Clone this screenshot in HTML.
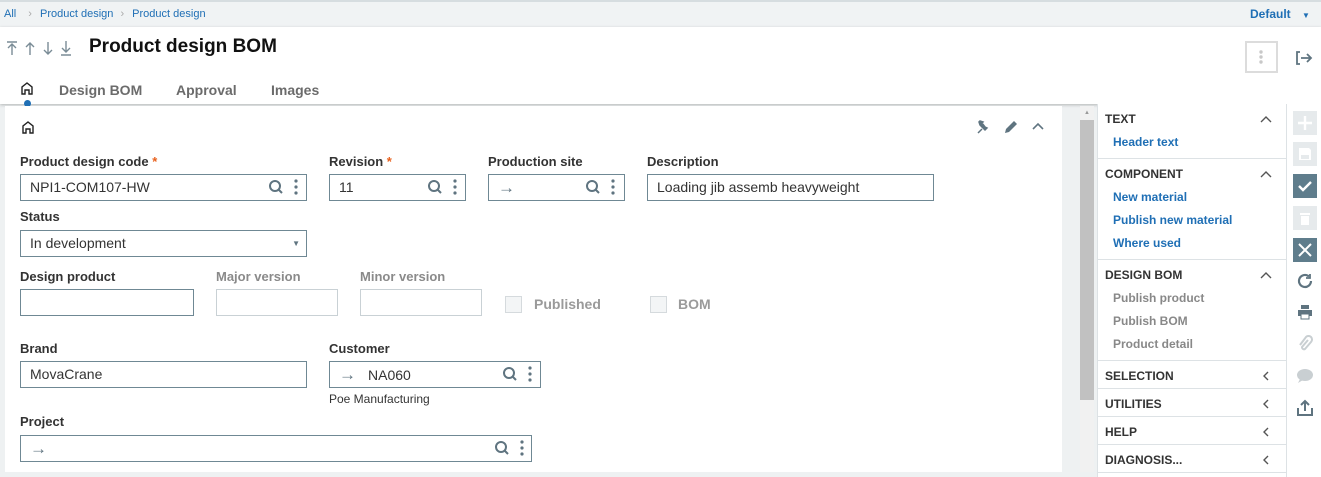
<!DOCTYPE html>
<html><head><meta charset="utf-8"><style>
*{box-sizing:border-box;margin:0;padding:0}
body{width:1321px;height:477px;overflow:hidden;background:#eef1f2;font-family:"Liberation Sans",sans-serif;position:relative;color:#222}
.a{position:absolute}
.lbl{position:absolute;font-size:13px;font-weight:bold;color:#333;white-space:nowrap}
.lbl.d{color:#8a8a8a}
.req{color:#e8601c}
.in{position:absolute;height:27px;border:1px solid #6f8894;background:#fff;font-size:14px;padding-left:9px;line-height:25px;color:#333}
.in.dis{border-color:#c9d1d5}
.ar{color:#5f7480;font-size:17px}
.sh{position:absolute;left:1105px;font-size:12px;font-weight:bold;color:#333}
.si{position:absolute;left:1113px;font-size:12px;font-weight:bold;color:#1f6fb5}
.si.g{color:#888}
.dv{position:absolute;left:1097px;width:190px;height:1px;background:#dde2e5}
.tb{position:absolute;left:1293px;width:24px;height:24px;display:flex;align-items:center;justify-content:center}
</style></head><body>
<div class="a" style="left:0;top:0;width:1321px;height:27px;background:#f0f3f4;border-top:2px solid #d6dde0"></div>
<div class="a" style="left:4px;top:8px;font-size:11px;color:#1f6fb5;white-space:nowrap">All <span style="color:#aaa;margin:0 5px 0 9px">›</span> Product design <span style="color:#aaa;margin:0 5px 0 4px">›</span> Product design</div>
<div class="a" style="left:1250px;top:7px;font-size:12px;font-weight:bold;color:#1f6fb5">Default <span style="font-size:8px;margin-left:8px">▼</span></div>
<div class="a" style="left:0;top:27px;width:1321px;height:77px;background:#fff;box-shadow:0 1px 3px rgba(0,0,0,.25)"></div>
<svg class="a" style="left:6px;top:40px" width="66" height="16" stroke="#7a8c96" stroke-width="1.4" fill="none"><path d="M1 2h10M6 15V4M2 8l4-4 4 4"/><path d="M24 15V3M20 7l4-4 4 4"/><path d="M42 2v12M38 10l4 4 4-4"/><path d="M60 1v11M56 8l4 4 4-4M55 15h10"/></svg>
<div class="a" style="left:89px;top:36px;font-size:19px;font-weight:bold;color:#111">Product design BOM</div>
<div class="a" style="left:1245px;top:41px;width:33px;height:32px;border:2px solid #dcdcdc"></div>
<svg class="a" style="left:1258px;top:49px" width="6" height="16" fill="#c8c8c8"><circle cx="3" cy="3" r="1.7"/><circle cx="3" cy="8" r="1.7"/><circle cx="3" cy="13" r="1.7"/></svg>
<svg class="a" style="left:1295px;top:50px" width="18" height="16" stroke="#5f7480" stroke-width="1.8" fill="none"><path d="M5 2H2v12h3M6 8h10M12 4l4 4-4 4"/></svg>
<svg class="a" style="left:20px;top:81px" width="14" height="14" stroke="#222" stroke-width="1.4" fill="none"><path d="M2 13V6l5-4 5 4v7H9V9H5v4z"/></svg>
<div class="a" style="left:24px;top:100px;width:7px;height:7px;border-radius:50%;background:#1f6fb5"></div>
<div class="a" style="left:59px;top:82px;font-size:14px;font-weight:bold;color:#6b6b6b">Design BOM</div>
<div class="a" style="left:176px;top:82px;font-size:14px;font-weight:bold;color:#6b6b6b">Approval</div>
<div class="a" style="left:271px;top:82px;font-size:14px;font-weight:bold;color:#6b6b6b">Images</div>
<div class="a" style="left:5px;top:106px;width:1057px;height:366px;background:#fff"></div>
<svg class="a" style="left:21px;top:120px" width="14" height="14" stroke="#222" stroke-width="1.4" fill="none"><path d="M2 13V6l5-4 5 4v7H9V9H5v4z"/></svg>
<svg class="a" style="left:975px;top:119px" width="80" height="16" fill="#5f7480"><path d="M3 14l4-4 M5 6l5 5 2-2-2-1-3-4 1-1-3-1-1 1z" stroke="#5f7480" stroke-width="1.5"/><path d="M30 14l1-4 8-8 3 3-8 8z"/><path d="M58 10l5-5 5 5" fill="none" stroke="#5f7480" stroke-width="1.6"/></svg>
<div class="lbl" style="left:20px;top:154px">Product design code <span class="req">*</span></div>
<div class="in" style="left:20px;top:174px;width:287px">NPI1-COM107-HW</div>
<div class="lbl" style="left:329px;top:154px">Revision <span class="req">*</span></div>
<div class="in" style="left:329px;top:174px;width:137px">11</div>
<div class="lbl" style="left:488px;top:154px">Production site</div>
<div class="in" style="left:488px;top:174px;width:137px"><span class="ar">→</span></div>
<div class="lbl" style="left:647px;top:154px">Description</div>
<div class="in" style="left:647px;top:174px;width:287px">Loading jib assemb heavyweight</div>
<div class="lbl" style="left:20px;top:209px">Status</div>
<div class="in" style="left:20px;top:230px;width:287px">In development<span style="position:absolute;right:6px;top:0;font-size:8px;color:#5f7480">▼</span></div>
<div class="lbl" style="left:20px;top:269px">Design product</div>
<div class="in" style="left:20px;top:289px;width:174px"></div>
<div class="lbl d" style="left:216px;top:269px">Major version</div>
<div class="in dis" style="left:216px;top:289px;width:122px"></div>
<div class="lbl d" style="left:360px;top:269px">Minor version</div>
<div class="in dis" style="left:360px;top:289px;width:122px"></div>
<div class="a" style="left:505px;top:296px;width:17px;height:17px;border:1px solid #d5dadd;background:#f3f5f6"></div>
<div class="lbl d" style="left:534px;top:296px;font-size:14px;color:#9a9a9a">Published</div>
<div class="a" style="left:650px;top:296px;width:17px;height:17px;border:1px solid #d5dadd;background:#f3f5f6"></div>
<div class="lbl d" style="left:678px;top:296px;font-size:14px;color:#9a9a9a">BOM</div>
<div class="lbl" style="left:20px;top:341px">Brand</div>
<div class="in" style="left:20px;top:361px;width:287px">MovaCrane</div>
<div class="lbl" style="left:329px;top:341px">Customer</div>
<div class="in" style="left:329px;top:361px;width:212px"><span class="ar" style="margin-right:12px">→</span>NA060</div>
<div class="a" style="left:329px;top:392px;font-size:12px;color:#333">Poe Manufacturing</div>
<div class="lbl" style="left:20px;top:414px">Project</div>
<div class="in" style="left:20px;top:435px;width:512px"><span class="ar">→</span></div>
<svg class="a" style="left:0;top:0" width="1062" height="477" fill="none" stroke="#5f7480" stroke-width="2">
<g id="q"><circle cx="275" cy="186" r="5"/><path d="M279 190l3 3"/></g>
<use href="#q" x="159"/><use href="#q" x="317"/><use href="#q" x="234" y="187"/><use href="#q" x="226" y="261"/>
<g fill="#5f7480" stroke="none"><g id="d"><circle cx="296" cy="181" r="1.6"/><circle cx="296" cy="187" r="1.6"/><circle cx="296" cy="193" r="1.6"/></g>
<use href="#d" x="159"/><use href="#d" x="317"/><use href="#d" x="234" y="187"/><use href="#d" x="226" y="261"/></g>
</svg>
<div class="a" style="left:1080px;top:106px;width:14px;height:366px;background:#f1f1f1"></div>
<div class="a" style="left:1080px;top:120px;width:14px;height:280px;background:#c1c1c1"></div>
<div class="a" style="left:1084px;top:110px;font-size:6px;color:#999">▲</div>
<div class="a" style="left:1097px;top:104px;width:190px;height:373px;background:#fff;border-left:1px solid #dde2e5;border-right:1px solid #dde2e5"></div>
<div class="a" style="left:1287px;top:104px;width:34px;height:373px;background:#fff"></div>
<svg class="a" style="left:1257px;top:110px" width="20" height="360" fill="none" stroke="#555" stroke-width="1.4">
<path d="M4 12l5-5 5 5M4 67l5-5 5 5M4 168l5-5 5 5"/>
<path d="M11 262l-4 4 4 4M11 290l-4 4 4 4M11 318l-4 4 4 4M11 346l-4 4 4 4"/></svg>
<div class="sh" style="top:112px">TEXT</div>
<div class="si" style="top:135px">Header text</div>
<div class="dv" style="top:158px"></div>
<div class="sh" style="top:167px">COMPONENT</div>
<div class="si" style="top:190px">New material</div>
<div class="si" style="top:213px">Publish new material</div>
<div class="si" style="top:236px">Where used</div>
<div class="dv" style="top:259px"></div>
<div class="sh" style="top:268px">DESIGN BOM</div>
<div class="si g" style="top:291px">Publish product</div>
<div class="si g" style="top:314px">Publish BOM</div>
<div class="si g" style="top:337px">Product detail</div>
<div class="dv" style="top:360px"></div>
<div class="sh" style="top:369px">SELECTION</div>
<div class="dv" style="top:388px"></div>
<div class="sh" style="top:397px">UTILITIES</div>
<div class="dv" style="top:416px"></div>
<div class="sh" style="top:425px">HELP</div>
<div class="dv" style="top:444px"></div>
<div class="sh" style="top:453px">DIAGNOSIS...</div>
<div class="dv" style="top:472px"></div>
<div class="tb" style="top:111px;background:#e6eaec"><svg width="16" height="16" stroke="#fff" stroke-width="2.4"><path d="M8 1v14M1 8h14"/></svg></div>
<div class="tb" style="top:142px;background:#e6eaec"><svg width="16" height="16" fill="#fff"><path d="M2 2h10l2 2v10H2z"/><rect x="4" y="9" width="8" height="4" fill="#e6eaec"/></svg></div>
<div class="tb" style="top:174px;background:#5f7d8c"><svg width="16" height="16" fill="none" stroke="#fff" stroke-width="2.4"><path d="M2 8l4 4 8-8"/></svg></div>
<div class="tb" style="top:206px;background:#e6eaec"><svg width="16" height="16" fill="#fff"><path d="M3 3h10v2H3zM4 6h8v9H4z"/></svg></div>
<div class="tb" style="top:238px;background:#5f7d8c"><svg width="16" height="16" stroke="#fff" stroke-width="2"><path d="M2 2l12 12M14 2L2 14"/></svg></div>
<div class="tb" style="top:269px"><svg width="18" height="18" fill="none" stroke="#5f7480" stroke-width="2.2"><path d="M15 9a6 6 0 1 1-2-4.5"/><path d="M14 2v4h-4" stroke-width="1.8"/></svg></div>
<div class="tb" style="top:300px"><svg width="18" height="18" fill="#5f7480"><rect x="5" y="2" width="8" height="4"/><rect x="2" y="7" width="14" height="6"/><rect x="5" y="11" width="8" height="5" fill="#fff" stroke="#5f7480"/></svg></div>
<div class="tb" style="top:332px"><svg width="18" height="18" fill="none" stroke="#c9cfd2" stroke-width="2"><path d="M12 5l-6 7a2 2 0 0 0 3 2l6-7a3.5 3.5 0 0 0-5-5L4 10"/></svg></div>
<div class="tb" style="top:364px"><svg width="18" height="18" fill="#c9cfd2"><ellipse cx="9" cy="8" rx="8" ry="6"/><path d="M4 12l-2 4 5-3z"/></svg></div>
<div class="tb" style="top:396px"><svg width="18" height="18" fill="none" stroke="#5f7480" stroke-width="2"><path d="M2 9v7h14V9M9 12V2M5 6l4-4 4 4"/></svg></div>
</body></html>
